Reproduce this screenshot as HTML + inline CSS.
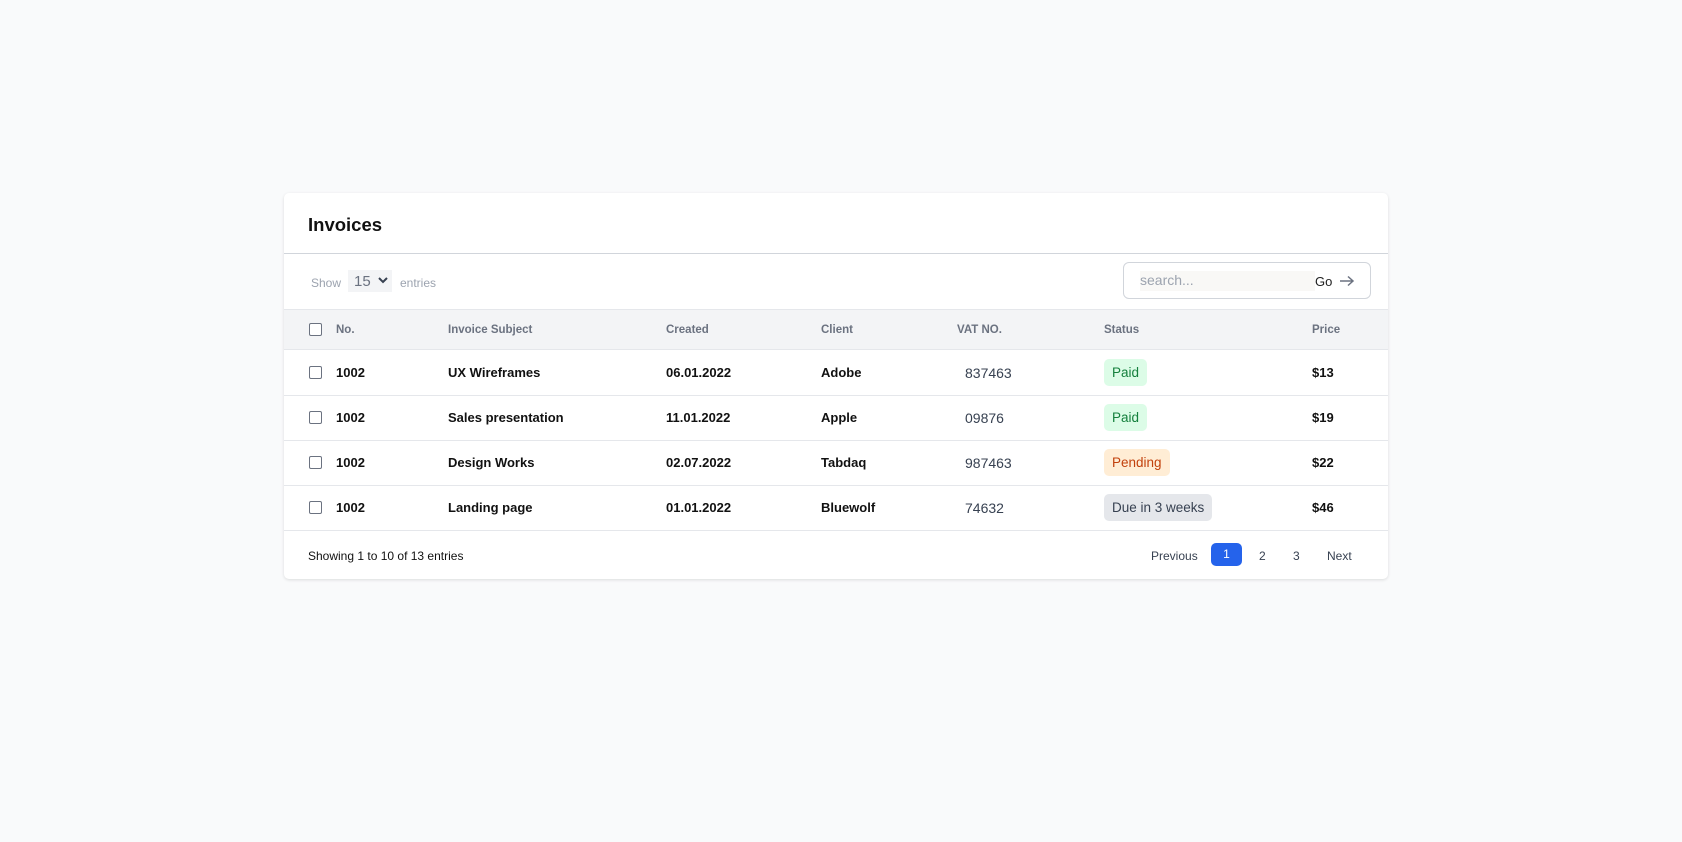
<!DOCTYPE html>
<html><head><style>
*{box-sizing:border-box;margin:0;padding:0}
body{width:1682px;height:842px;background:#f9fafb;font-family:"Liberation Sans",sans-serif;color:#111;position:relative;overflow:hidden}
.card{position:absolute;left:284px;top:193px;width:1104px;height:386px;background:#fff;border-radius:5px;box-shadow:0 1px 3px rgba(0,0,0,.12)}
.a{position:absolute;white-space:nowrap}
.hline{position:absolute;left:0;width:1104px;height:1px;background:#e5e7eb}
.cb{position:absolute;left:25px;width:13px;height:13px;border:1px solid #6b7280;border-radius:2px;background:#fff}
.th{font-size:11.5px;color:#6b7280;font-weight:bold}
.td{font-size:13px;font-weight:bold;color:#111}
.badge{position:absolute;height:27px;line-height:27px;padding:0 8px;border-radius:5px;font-size:13.5px}
</style></head><body>
<div class="card">
<div class="a" style="left:24px;top:21px;font-size:18.5px;font-weight:bold;color:#111">Invoices</div>
<div class="hline" style="top:60px;background:#d1d5db"></div>
<div class="a" style="left:27px;top:83px;font-size:12px;color:#9ca3af">Show</div>
<div class="a" style="left:64px;top:77px;width:44px;height:22px;background:#f3f4f6;font-size:15px;color:#6b7280;padding:3px 6px">15</div>
<svg class="a" style="left:94px;top:84px" width="10" height="7" viewBox="0 0 10 7"><path d="M1 1L5 5L9 1" fill="none" stroke="#374151" stroke-width="2"/></svg>
<div class="a" style="left:116px;top:83px;font-size:12px;color:#9ca3af">entries</div>
<div class="a" style="left:839px;top:69px;width:248px;height:37px;border:1px solid #d1d5db;border-radius:6px"></div>
<div class="a" style="left:856px;top:78px;width:175px;height:20px;background:#f9f8f6;font-size:14px;color:#9ca3af;padding-top:1px">search...</div>
<div class="a" style="left:1031px;top:81px;font-size:13px;color:#222">Go</div>
<svg class="a" style="left:1055px;top:82px" width="16" height="12" viewBox="0 0 16 12"><path d="M1 6H14M9 1.5L14 6L9 10.5" fill="none" stroke="#6b7280" stroke-width="1.5"/></svg>
<div class="a" style="left:0;top:116px;width:1104px;height:41px;background:#f3f4f6;border-top:1px solid #e5e7eb;border-bottom:1px solid #e5e7eb"></div>
<div class="cb" style="top:130px"></div>
<div class="a th" style="left:52px;top:131px">No.</div>
<div class="a th" style="left:164px;top:131px">Invoice Subject</div>
<div class="a th" style="left:382px;top:131px">Created</div>
<div class="a th" style="left:537px;top:131px">Client</div>
<div class="a th" style="left:673px;top:131px">VAT NO.</div>
<div class="a th" style="left:820px;top:131px">Status</div>
<div class="a th" style="left:1028px;top:131px">Price</div>

<div class="cb" style="top:173px"></div>
<div class="a td" style="left:52px;top:172px">1002</div><div class="a td" style="left:164px;top:172px">UX Wireframes</div><div class="a td" style="left:382px;top:172px">06.01.2022</div><div class="a td" style="left:537px;top:172px">Adobe</div><div class="a" style="left:681px;top:172px;font-size:14px;color:#374151">837463</div>
<div class="badge" style="left:820px;top:166px;background:#dcfce7;color:#15803d">Paid</div><div class="a td" style="left:1028px;top:172px">$13</div>
<div class="hline" style="top:202px"></div>

<div class="cb" style="top:218px"></div>
<div class="a td" style="left:52px;top:217px">1002</div><div class="a td" style="left:164px;top:217px">Sales presentation</div><div class="a td" style="left:382px;top:217px">11.01.2022</div><div class="a td" style="left:537px;top:217px">Apple</div><div class="a" style="left:681px;top:217px;font-size:14px;color:#374151">09876</div>
<div class="badge" style="left:820px;top:211px;background:#dcfce7;color:#15803d">Paid</div><div class="a td" style="left:1028px;top:217px">$19</div>
<div class="hline" style="top:247px"></div>

<div class="cb" style="top:263px"></div>
<div class="a td" style="left:52px;top:262px">1002</div><div class="a td" style="left:164px;top:262px">Design Works</div><div class="a td" style="left:382px;top:262px">02.07.2022</div><div class="a td" style="left:537px;top:262px">Tabdaq</div><div class="a" style="left:681px;top:262px;font-size:14px;color:#374151">987463</div>
<div class="badge" style="left:820px;top:256px;background:#ffedd5;color:#c2410c">Pending</div><div class="a td" style="left:1028px;top:262px">$22</div>
<div class="hline" style="top:292px"></div>

<div class="cb" style="top:308px"></div>
<div class="a td" style="left:52px;top:307px">1002</div><div class="a td" style="left:164px;top:307px">Landing page</div><div class="a td" style="left:382px;top:307px">01.01.2022</div><div class="a td" style="left:537px;top:307px">Bluewolf</div><div class="a" style="left:681px;top:307px;font-size:14px;color:#374151">74632</div>
<div class="badge" style="left:820px;top:301px;background:#e5e7eb;color:#374151">Due in 3 weeks</div><div class="a td" style="left:1028px;top:307px">$46</div>
<div class="hline" style="top:337px"></div>

<div class="a" style="left:24px;top:356px;font-size:12px;color:#111">Showing 1 to 10 of 13 entries</div>
<div class="a" style="left:867px;top:356px;font-size:12px;color:#374151">Previous</div>
<div class="a" style="left:927px;top:350px;width:31px;height:23px;background:#2563eb;border-radius:5px;color:#fff;font-size:12px;text-align:center;line-height:23px">1</div>
<div class="a" style="left:975px;top:356px;font-size:12px;color:#374151">2</div>
<div class="a" style="left:1009px;top:356px;font-size:12px;color:#374151">3</div>
<div class="a" style="left:1043px;top:356px;font-size:12px;color:#374151">Next</div>
</div>
</body></html>
